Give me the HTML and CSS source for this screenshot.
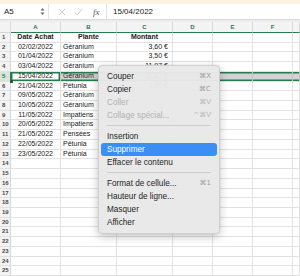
FILE: index.html
```html
<!DOCTYPE html>
<html lang="fr">
<head>
<meta charset="utf-8">
<title>Feuille</title>
<link rel="stylesheet" href="styles.css">
</head>
<body>
<div class="strip"></div>
<div class="fbar">
  <div class="namebox"><span class="ref">A5</span>
    <svg class="stepper" width="5" height="9" viewBox="0 0 5 9"><path d="M0.5 3.5 L2.5 1 L4.5 3.5Z M0.5 5.5 L2.5 8 L4.5 5.5Z" fill="#6b6b6b"/></svg>
  </div>
  <div class="ficons">
    <svg width="8" height="8" viewBox="0 0 8 8"><path d="M1 1 L7 7 M7 1 L1 7" stroke="#c4c4c4" stroke-width="0.9"/></svg>
    <svg width="9" height="8" viewBox="0 0 9 8"><path d="M1 4.5 L3.3 7 L8 1" stroke="#c4c4c4" stroke-width="0.9" fill="none"/></svg>
    <span class="fx">fx</span>
  </div>
  <div class="fval">15/04/2022</div>
</div>
<div class="band"></div>
<div class="sheet">
  <div class="row head"><div class="c rn"></div><div class="c">A</div><div class="c">B</div><div class="c">C</div><div class="c">D</div><div class="c">E</div><div class="c">F</div><div class="c"></div></div>
  <div class="row"><div class="c rn">1</div><div class="c ctr b">Date Achat</div><div class="c ctr b">Plante</div><div class="c ctr b">Montant</div><div class="c"></div><div class="c"></div><div class="c"></div><div class="c"></div></div>
  <div class="row"><div class="c rn">2</div><div class="c ctr">02/02/2022</div><div class="c">Géranium</div><div class="c rt">3,60 €</div><div class="c"></div><div class="c"></div><div class="c"></div><div class="c"></div></div>
  <div class="row"><div class="c rn">3</div><div class="c ctr">01/04/2022</div><div class="c">Géranium</div><div class="c rt">3,50 €</div><div class="c"></div><div class="c"></div><div class="c"></div><div class="c"></div></div>
  <div class="row"><div class="c rn">4</div><div class="c ctr">03/04/2022</div><div class="c">Géranium</div><div class="c rt">11,97 €</div><div class="c"></div><div class="c"></div><div class="c"></div><div class="c"></div></div>
  <div class="row sel"><div class="c rn">5</div><div class="c ctr active">15/04/2022</div><div class="c">Géranium</div><div class="c rt">11,97 €</div><div class="c"></div><div class="c"></div><div class="c"></div><div class="c"></div></div>
  <div class="row"><div class="c rn">6</div><div class="c ctr">21/04/2022</div><div class="c">Pétunia</div><div class="c rt">4,20 €</div><div class="c"></div><div class="c"></div><div class="c"></div><div class="c"></div></div>
  <div class="row"><div class="c rn">7</div><div class="c ctr">09/05/2022</div><div class="c">Géranium</div><div class="c rt"></div><div class="c"></div><div class="c"></div><div class="c"></div><div class="c"></div></div>
  <div class="row"><div class="c rn">8</div><div class="c ctr">10/05/2022</div><div class="c">Géranium</div><div class="c rt"></div><div class="c"></div><div class="c"></div><div class="c"></div><div class="c"></div></div>
  <div class="row"><div class="c rn">9</div><div class="c ctr">11/05/2022</div><div class="c">Impatiens</div><div class="c rt"></div><div class="c"></div><div class="c"></div><div class="c"></div><div class="c"></div></div>
  <div class="row"><div class="c rn">10</div><div class="c ctr">20/05/2022</div><div class="c">Impatiens</div><div class="c rt"></div><div class="c"></div><div class="c"></div><div class="c"></div><div class="c"></div></div>
  <div class="row"><div class="c rn">11</div><div class="c ctr">21/05/2022</div><div class="c">Pensées</div><div class="c rt"></div><div class="c"></div><div class="c"></div><div class="c"></div><div class="c"></div></div>
  <div class="row"><div class="c rn">12</div><div class="c ctr">22/05/2022</div><div class="c">Pétunia</div><div class="c rt"></div><div class="c"></div><div class="c"></div><div class="c"></div><div class="c"></div></div>
  <div class="row"><div class="c rn">13</div><div class="c ctr">23/05/2022</div><div class="c">Pétunia</div><div class="c rt"></div><div class="c"></div><div class="c"></div><div class="c"></div><div class="c"></div></div>
  <div class="row"><div class="c rn">14</div><div class="c"></div><div class="c"></div><div class="c"></div><div class="c"></div><div class="c"></div><div class="c"></div><div class="c"></div></div>
  <div class="row"><div class="c rn">15</div><div class="c"></div><div class="c"></div><div class="c"></div><div class="c"></div><div class="c"></div><div class="c"></div><div class="c"></div></div>
  <div class="row"><div class="c rn">16</div><div class="c"></div><div class="c"></div><div class="c"></div><div class="c"></div><div class="c"></div><div class="c"></div><div class="c"></div></div>
  <div class="row"><div class="c rn">17</div><div class="c"></div><div class="c"></div><div class="c"></div><div class="c"></div><div class="c"></div><div class="c"></div><div class="c"></div></div>
  <div class="row"><div class="c rn">18</div><div class="c"></div><div class="c"></div><div class="c"></div><div class="c"></div><div class="c"></div><div class="c"></div><div class="c"></div></div>
  <div class="row"><div class="c rn">19</div><div class="c"></div><div class="c"></div><div class="c"></div><div class="c"></div><div class="c"></div><div class="c"></div><div class="c"></div></div>
  <div class="row"><div class="c rn">20</div><div class="c"></div><div class="c"></div><div class="c"></div><div class="c"></div><div class="c"></div><div class="c"></div><div class="c"></div></div>
  <div class="row"><div class="c rn">21</div><div class="c"></div><div class="c"></div><div class="c"></div><div class="c"></div><div class="c"></div><div class="c"></div><div class="c"></div></div>
  <div class="row"><div class="c rn">22</div><div class="c"></div><div class="c"></div><div class="c"></div><div class="c"></div><div class="c"></div><div class="c"></div><div class="c"></div></div>
  <div class="row"><div class="c rn">23</div><div class="c"></div><div class="c"></div><div class="c"></div><div class="c"></div><div class="c"></div><div class="c"></div><div class="c"></div></div>
  <div class="row"><div class="c rn">24</div><div class="c"></div><div class="c"></div><div class="c"></div><div class="c"></div><div class="c"></div><div class="c"></div><div class="c"></div></div>
  <div class="row"><div class="c rn">25</div><div class="c"></div><div class="c"></div><div class="c"></div><div class="c"></div><div class="c"></div><div class="c"></div><div class="c"></div></div>

  <div class="menu">
    <div class="mi"><span>Couper</span><span class="sc">⌘X</span></div>
    <div class="mi"><span>Copier</span><span class="sc">⌘C</span></div>
    <div class="mi dis"><span>Coller</span><span class="sc">⌘V</span></div>
    <div class="mi dis"><span>Collage spécial...</span><span class="sc">^⌘V</span></div>
    <div class="msep"></div>
    <div class="mi"><span>Insertion</span></div>
    <div class="mi hl"><span>Supprimer</span></div>
    <div class="mi"><span>Effacer le contenu</span></div>
    <div class="msep"></div>
    <div class="mi"><span>Format de cellule...</span><span class="sc">⌘1</span></div>
    <div class="mi"><span>Hauteur de ligne...</span></div>
    <div class="mi"><span>Masquer</span></div>
    <div class="mi"><span>Afficher</span></div>
  </div>
</div>
</body>
</html>
```

FILE: styles.css
```css
html, body {
  margin: 0;
  padding: 0;
  background: #ffffff;
  overflow: hidden;
}
body {
  width: 300px;
  height: 276px;
  font-family: "Liberation Sans", Arial, sans-serif;
  color: #222;
}
.strip {
  height: 4px;
  background: #fbf3df;
}
.fbar {
  height: 15px;
  display: flex;
  align-items: center;
  background: #fff;
  font-size: 8px;
}
.namebox {
  width: 49px;
  height: 100%;
  box-sizing: border-box;
  border-right: 1px solid #e4e4e4;
  display: flex;
  align-items: center;
  justify-content: space-between;
  padding: 0 3px 0 4px;
}
.ref { color: #222; }
.ficons {
  width: 58px;
  height: 100%;
  box-sizing: border-box;
  border-right: 1px solid #e4e4e4;
  display: flex;
  align-items: center;
  padding-left: 9px;
  gap: 8px;
}
.fx {
  font-family: "Liberation Serif", "Times New Roman", serif;
  font-style: italic;
  font-size: 9px;
  color: #555;
  margin-left: 2px;
}
.fval {
  padding-left: 6px;
  color: #222;
}
.band {
  height: 3px;
  background: #ececec;
  border-top: 1px solid #dcdcdc;
  box-sizing: border-box;
}
.sheet {
  position: relative;
}
.row {
  display: grid;
  grid-template-columns: 11px 50px 56px 56px 40px 40px 40px 1fr;
  height: 9.72px;
}
.c {
  box-sizing: border-box;
  border-right: 1px solid #e2e2e2;
  border-bottom: 1px solid #e2e2e2;
  font-size: 7px;
  line-height: 8.7px;
  padding: 0 2px;
  white-space: nowrap;
  overflow: hidden;
}
.ctr { text-align: center; }
.rt { text-align: right; padding-right: 4px; }
.b { font-weight: bold; }
.rn {
  background: #f3f3f3;
  color: #4a4a4a;
  font-size: 6px;
  font-weight: bold;
  padding: 0 0 0 2px;
  border-right: 1px solid #d6d6d6;
}
.head {
  height: 11px;
}
.head .c {
  background: #f3f3f3;
  color: #2a7a4b;
  font-size: 6px;
  font-weight: bold;
  text-align: center;
  line-height: 10px;
  border-bottom: 1.5px solid #2a7a4b;
  border-right-color: #dadada;
}
.head .rn {
  border-bottom: 1px solid #d6d6d6;
}
.sel .c {
  background: #d3d3d3;
  box-shadow: inset 0 1.5px 0 #2a7a4b, inset 0 -1.5px 0 #2a7a4b;
  border-right-color: #c4c4c4;
}
.sel .rn {
  background: #d9e3dc;
  color: #2a7a4b;
  box-shadow: none;
  border-right: 1.5px solid #2a7a4b;
}
.sel .active {
  background: #fff;
  box-shadow: inset 0 0 0 1.5px #2a7a4b;
  position: relative;
  overflow: visible;
}
.sel .active::after {
  content: "";
  position: absolute;
  left: -1.5px;
  bottom: -2px;
  width: 3px;
  height: 3px;
  background: #1f5f39;
}
.menu {
  position: absolute;
  left: 98px;
  top: 43px;
  width: 122px;
  box-sizing: border-box;
  padding: 3.5px 2px 4px;
  background: rgba(232, 232, 232, 0.97);
  border: 0.5px solid #cfcfcf;
  border-radius: 4px;
  box-shadow: 0 3px 10px rgba(0, 0, 0, 0.22), 0 0 1px rgba(0, 0, 0, 0.2);
  font-size: 8.2px;
  color: #1e1e1e;
}
.mi {
  height: 13px;
  display: flex;
  align-items: center;
  justify-content: space-between;
  padding: 0 6px 0 6px;
  border-radius: 3px;
  white-space: nowrap;
}
.mi.dis { color: #b3b3b3; }
.sc {
  color: #9d9d9d;
  font-family: "DejaVu Sans", "Liberation Sans", sans-serif;
  font-size: 7px;
}
.mi.dis .sc { color: #b8b8b8; }
.mi.hl {
  background: #3b8ef3;
  color: #fff;
}
.msep {
  height: 8px;
  display: flex;
  align-items: center;
  padding: 0 6px;
}
.msep::before {
  content: "";
  flex: 1;
  height: 1px;
  background: #cdcdcd;
}
```
